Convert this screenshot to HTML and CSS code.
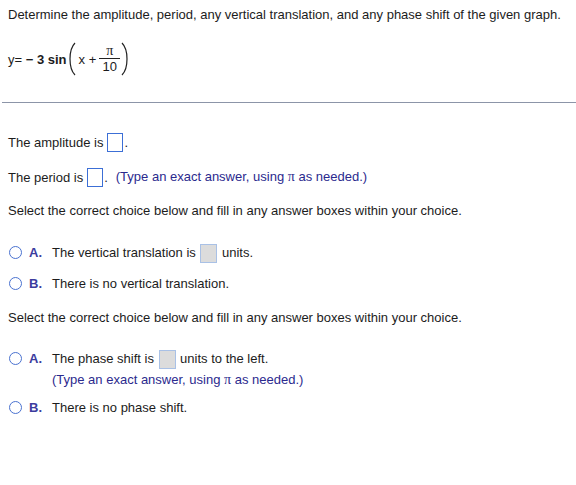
FILE: index.html
```html
<!DOCTYPE html>
<html>
<head>
<meta charset="utf-8">
<link rel="stylesheet" href="styles.css">
</head>
<body>
<div class="question">
  <p class="intro">Determine the amplitude, period, any vertical translation, and any phase shift of the given graph.</p>
  <div class="equation">
    <span class="lhs">y= </span><span class="minus">− 3 </span><span class="fn">sin</span>
    <span class="paren">
      <svg class="pl" width="7" height="34" viewBox="0 0 7 34"><path d="M6 1 Q1 6 1 17 Q1 28 6 33" fill="none" stroke="#222" stroke-width="1.2"/></svg>
      <span class="inner">x +</span>
      <span class="frac"><span class="num">π</span><span class="den">10</span></span>
      <svg class="pr" width="7" height="34" viewBox="0 0 7 34"><path d="M1 1 Q6 6 6 17 Q6 28 1 33" fill="none" stroke="#222" stroke-width="1.2"/></svg>
    </span>
  </div>
</div>
<hr class="divider">
<div class="answers">
  <p class="line">The amplitude is <span class="box active"></span>.</p>
  <p class="line">The period is <span class="box active"></span>. <span class="hint">(Type an exact answer, using <span class="pi">π</span> as needed.)</span></p>
  <p class="line select">Select the correct choice below and fill in any answer boxes within your choice.</p>
  <div class="choices">
    <div class="choice">
      <span class="radio"></span><span class="letter">A.</span>
      <span class="ctext">The vertical translation is <span class="box grey"></span> units.</span>
    </div>
    <div class="choice">
      <span class="radio"></span><span class="letter">B.</span>
      <span class="ctext">There is no vertical translation.</span>
    </div>
  </div>
  <p class="line select">Select the correct choice below and fill in any answer boxes within your choice.</p>
  <div class="choices second">
    <div class="choice">
      <span class="radio"></span><span class="letter">A.</span>
      <span class="ctext">The phase shift is <span class="box grey"></span> units to the left.<span class="hint">(Type an exact answer, using <span class="pi">π</span> as needed.)</span></span>
    </div>
    <div class="choice">
      <span class="radio"></span><span class="letter">B.</span>
      <span class="ctext">There is no phase shift.</span>
    </div>
  </div>
</div>
</body>
</html>
```
FILE: styles.css
```css
html, body {
  margin: 0;
  padding: 0;
  background: #fff;
}
body {
  font-family: "Liberation Sans", Arial, sans-serif;
  font-size: 13px;
  color: #1c1c1c;
}
p { margin: 0; }
.question {
  padding: 7px 8px 0 8px;
}
.intro {
  line-height: 16px;
}
.equation {
  display: flex;
  align-items: center;
  margin-top: 19px;
  height: 34px;
}
.lhs { white-space: pre; }
.minus { font-weight: bold; white-space: pre; }
.fn { font-weight: bold; margin-right: 2px; }
.paren {
  display: flex;
  align-items: center;
}
.inner { margin: 0 2px 0 3px; }
.frac {
  display: inline-flex;
  flex-direction: column;
  align-items: center;
  margin: 0 1px;
}
.num {
  font-family: "Liberation Serif", serif;
  font-size: 14px;
  line-height: 14px;
  border-bottom: 1px solid #222;
  width: 21px;
  text-align: center;
}
.den { line-height: 15px; }
.pi { font-family: "Liberation Serif", serif; font-size: 14px; }
.divider {
  margin: 26px 0 0 2px;
  border: 0;
  border-top: 1.5px solid #8c95a8;
  height: 0;
}
.answers {
  padding: 0 8px;
}
.line {
  display: flex;
  align-items: center;
  height: 20px;
}
.line:first-child { margin-top: 29px; }
.line + .line { margin-top: 15px; }
.line.select { margin-top: 13px; }
.box {
  display: inline-block;
  width: 14px;
  height: 17px;
  margin: 0 1px 0 4px;
  box-sizing: content-box;
}
.box.active {
  border: 1.5px solid #3c6fd6;
}
.box.grey {
  background: #dcdcdc;
  border: 1px solid #a9c1e6;
  width: 15px;
  margin: 0 1px;
}
.hint {
  color: #2b2a8e;
  margin-left: 8px;
}
.ctext .hint {
  display: block;
  margin-left: 0;
  line-height: 22px;
  margin-bottom: -4px;
}
.choices {
  margin-top: 23px;
}
.choices.second {
  margin-top: 22px;
}
.choice {
  display: flex;
  align-items: flex-start;
  margin-bottom: 11px;
}
.choice:last-child { margin-bottom: 10px; }
.radio {
  width: 11px;
  height: 11px;
  border: 1.3px solid #4a72d0;
  border-radius: 50%;
  margin: 3px 7px 0 1px;
  flex: none;
}
.letter {
  font-weight: bold;
  color: #3c3c9e;
  width: 23px;
  flex: none;
  line-height: 20px;
}
.ctext {
  line-height: 20px;
}
.ctext .box.grey {
  vertical-align: middle;
}
```
